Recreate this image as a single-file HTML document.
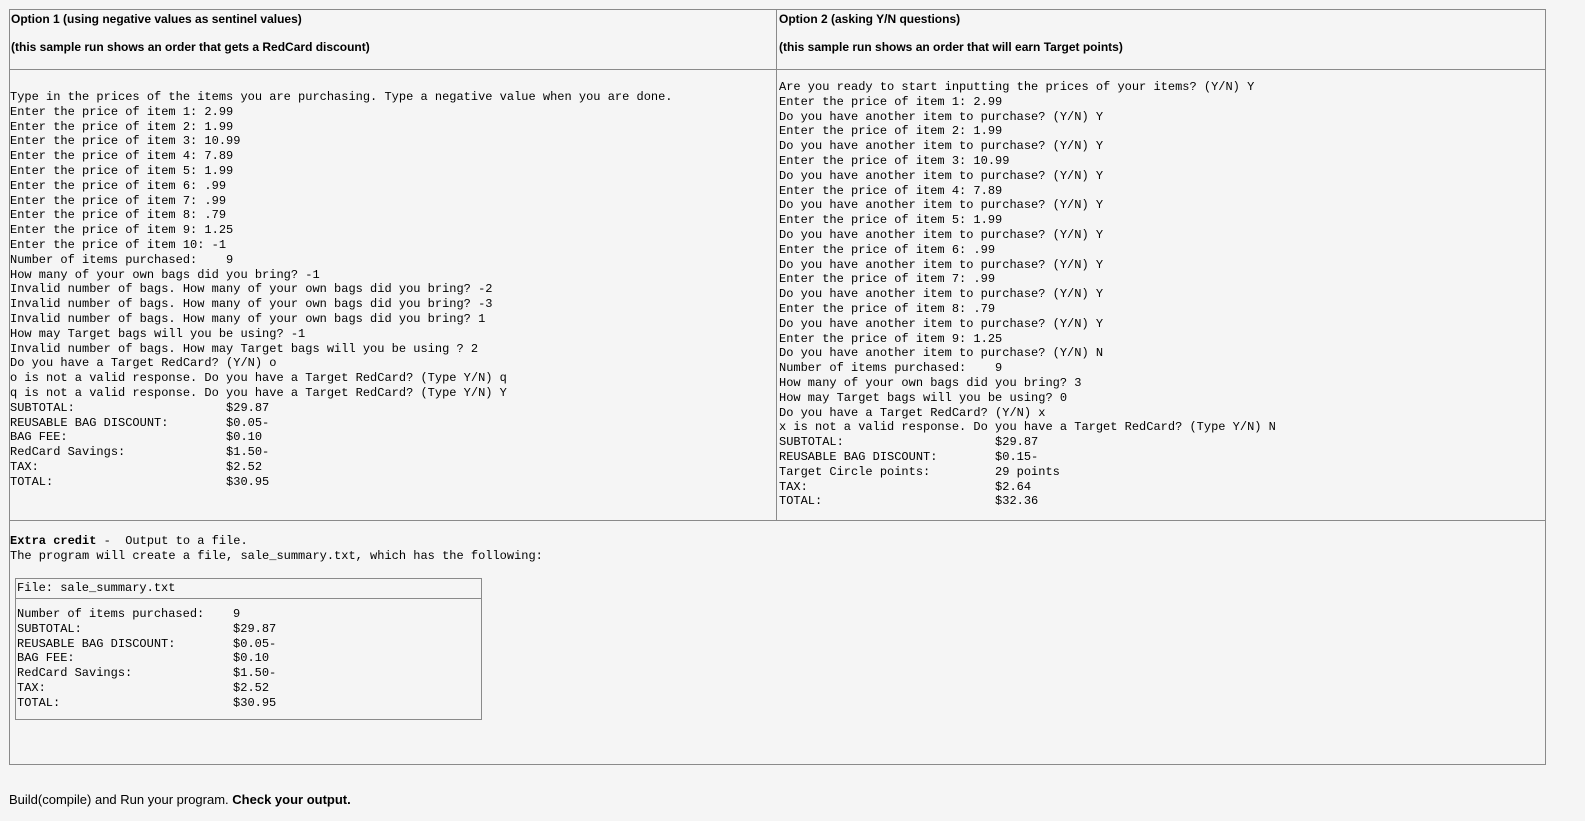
<!DOCTYPE html>
<html><head><meta charset="utf-8"><style>
body{margin:0;background:#f5f5f5;width:1585px;height:821px;position:relative;overflow:hidden;color:#000}
.b{position:absolute;border:1px solid #8a8a8a;box-sizing:border-box}
.h{position:absolute;font:bold 12px "Liberation Sans",sans-serif;white-space:nowrap}
pre{position:absolute;margin:0;font:12px/14.8px "Liberation Mono",monospace}
</style></head><body>
<div class="b" style="left:9px;top:9px;width:1537px;height:756px"></div>
<div class="b" style="left:9px;top:69px;width:1537px;height:452px;border-left:none;border-right:none;border-bottom:1px solid #8a8a8a"></div>
<div class="b" style="left:776px;top:9px;width:1px;height:512px;border:none;background:#8a8a8a"></div>
<div class="h" style="left:11px;top:12px">Option 1 (using negative values as sentinel values)</div>
<div class="h" style="left:11px;top:40px">(this sample run shows an order that gets a RedCard discount)</div>
<div class="h" style="left:779px;top:12px">Option 2 (asking Y/N questions)</div>
<div class="h" style="left:779px;top:40px">(this sample run shows an order that will earn Target points)</div>
<pre style="left:10px;top:90px">Type in the prices of the items you are purchasing. Type a negative value when you are done.
Enter the price of item 1: 2.99
Enter the price of item 2: 1.99
Enter the price of item 3: 10.99
Enter the price of item 4: 7.89
Enter the price of item 5: 1.99
Enter the price of item 6: .99
Enter the price of item 7: .99
Enter the price of item 8: .79
Enter the price of item 9: 1.25
Enter the price of item 10: -1
Number of items purchased:    9
How many of your own bags did you bring? -1
Invalid number of bags. How many of your own bags did you bring? -2
Invalid number of bags. How many of your own bags did you bring? -3
Invalid number of bags. How many of your own bags did you bring? 1
How may Target bags will you be using? -1
Invalid number of bags. How may Target bags will you be using ? 2
Do you have a Target RedCard? (Y/N) o
o is not a valid response. Do you have a Target RedCard? (Type Y/N) q
q is not a valid response. Do you have a Target RedCard? (Type Y/N) Y
SUBTOTAL:                     $29.87
REUSABLE BAG DISCOUNT:        $0.05-
BAG FEE:                      $0.10
RedCard Savings:              $1.50-
TAX:                          $2.52
TOTAL:                        $30.95</pre>
<pre style="left:779px;top:80px">Are you ready to start inputting the prices of your items? (Y/N) Y
Enter the price of item 1: 2.99
Do you have another item to purchase? (Y/N) Y
Enter the price of item 2: 1.99
Do you have another item to purchase? (Y/N) Y
Enter the price of item 3: 10.99
Do you have another item to purchase? (Y/N) Y
Enter the price of item 4: 7.89
Do you have another item to purchase? (Y/N) Y
Enter the price of item 5: 1.99
Do you have another item to purchase? (Y/N) Y
Enter the price of item 6: .99
Do you have another item to purchase? (Y/N) Y
Enter the price of item 7: .99
Do you have another item to purchase? (Y/N) Y
Enter the price of item 8: .79
Do you have another item to purchase? (Y/N) Y
Enter the price of item 9: 1.25
Do you have another item to purchase? (Y/N) N
Number of items purchased:    9
How many of your own bags did you bring? 3
How may Target bags will you be using? 0
Do you have a Target RedCard? (Y/N) x
x is not a valid response. Do you have a Target RedCard? (Type Y/N) N
SUBTOTAL:                     $29.87
REUSABLE BAG DISCOUNT:        $0.15-
Target Circle points:         29 points
TAX:                          $2.64
TOTAL:                        $32.36</pre>
<pre style="left:10px;top:534px"><b>Extra credit</b> -  Output to a file.
The program will create a file, sale_summary.txt, which has the following:</pre>
<div class="b" style="left:15px;top:578px;width:467px;height:142px"></div>
<div class="b" style="left:15px;top:598px;width:467px;height:1px;border:none;background:#8a8a8a"></div>
<pre style="left:17px;top:581px">File: sale_summary.txt</pre>
<pre style="left:17px;top:607px">Number of items purchased:    9
SUBTOTAL:                     $29.87
REUSABLE BAG DISCOUNT:        $0.05-
BAG FEE:                      $0.10
RedCard Savings:              $1.50-
TAX:                          $2.52
TOTAL:                        $30.95</pre>
<div style="position:absolute;left:9px;top:792px;font:13px 'Liberation Sans',sans-serif;white-space:nowrap">Build(compile) and Run your program. <b>Check your output.</b></div>
</body></html>
